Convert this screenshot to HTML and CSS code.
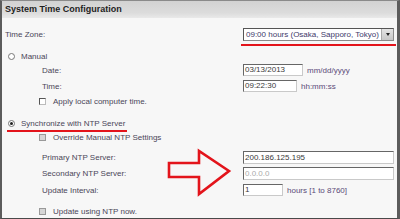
FILE: index.html
```html
<!DOCTYPE html>
<html>
<head>
<meta charset="utf-8">
<link rel="stylesheet" href="styles.css">
</head>
<body>
<div class="panel">
  <div class="header">System Time Configuration</div>
  <div class="body">
    <div class="row tz">
      <div class="label l0">Time Zone:</div>
      <div class="field">
        <div class="select mark-tz">
          <span class="select-text">09:00 hours (Osaka, Sapporo, Tokyo)</span>
          <span class="select-btn"><span class="tri"></span></span>
        </div>
      </div>
    </div>
    <div class="row manual">
      <div class="label l1"><span class="radio"></span>Manual</div>
    </div>
    <div class="row date">
      <div class="label l2">Date:</div>
      <div class="field"><span class="input w60">03/13/2013</span><span class="unit">mm/dd/yyyy</span></div>
    </div>
    <div class="row time">
      <div class="label l2">Time:</div>
      <div class="field"><span class="input w54">09:22:30</span><span class="unit">hh:mm:ss</span></div>
    </div>
    <div class="row apply">
      <div class="label l3"><span class="check"></span>Apply local computer time.</div>
    </div>
    <div class="row sync">
      <div class="label l1"><span class="mark-sync"><span class="radio on"></span>Synchronize with NTP Server</span></div>
    </div>
    <div class="row override">
      <div class="label l3"><span class="check dis"></span>Override Manual NTP Settings</div>
    </div>
    <div class="row primary">
      <div class="label l2">Primary NTP Server:</div>
      <div class="field"><span class="input wide">200.186.125.195</span></div>
    </div>
    <div class="row secondary">
      <div class="label l2">Secondary NTP Server:</div>
      <div class="field"><span class="input wide ph">0.0.0.0</span></div>
    </div>
    <div class="row interval">
      <div class="label l2">Update Interval:</div>
      <div class="field"><span class="input w40">1</span><span class="unit">hours [1 to 8760]</span></div>
    </div>
    <div class="row now">
      <div class="label l3"><span class="check dis"></span>Update using NTP now.</div>
    </div>
    <svg class="arrow" width="70" height="52" viewBox="0 0 70 52">
      <polygon points="4,15 34,15 34,3 64,23 34,46 34,29 4,29" fill="none" stroke="#e3141b" stroke-width="2.6" stroke-linejoin="miter"/>
    </svg>
  </div>
</div>
</body>
</html>
```
FILE: styles.css
```css
html, body { margin: 0; padding: 0; }
body {
  width: 400px;
  height: 219px;
  overflow: hidden;
  font-family: "Liberation Sans", Arial, sans-serif;
  font-size: 8px;
  color: #4a4658;
  background: #f7f7f7;
}
.panel {
  width: 400px;
  height: 219px;
  box-sizing: border-box;
  border-left: 2px solid #5c5c5c;
  border-right: 3px solid #5c5c5c;
  border-top: 1px solid #8a8a8a;
  border-bottom: 1px solid #4a4a4a;
  background: #f7f7f7;
  display: flex;
  flex-direction: column;
}
.header {
  height: 17px;
  flex: none;
  box-sizing: border-box;
  padding-left: 3px;
  line-height: 16px;
  font-family: "Liberation Sans", Arial, sans-serif;
  font-weight: bold;
  font-size: 9px;
  color: #1e1e1e;
  background: linear-gradient(#d2d2d2, #dcdcdc 70%, #e9e9e9);
}
.body {
  position: relative;
  flex: 1;
  display: flex;
  flex-direction: column;
}
.row {
  height: 14px;
  flex: none;
  display: grid;
  grid-template-columns: 241px 1fr;
  align-items: center;
}
.label {
  display: flex;
  align-items: center;
  white-space: nowrap;
}
.l0 { padding-left: 3px; }
.l1 { padding-left: 6px; }
.l2 { padding-left: 40px; }
.l3 { padding-left: 37px; }
.field {
  display: flex;
  align-items: center;
}
.tz { margin-top: 9px; }
.manual { margin-top: 8px; }
.date { margin-top: 0; }
.time { margin-top: 2px; }
.apply { margin-top: 1px; }
.sync { margin-top: 8px; }
.override { margin-top: 0; }
.primary { margin-top: 6px; }
.secondary { margin-top: 2px; }
.interval { margin-top: 3px; }
.now { margin-top: 7px; }

.select {
  position: relative;
  width: 151px;
  height: 13px;
  box-sizing: border-box;
  border: 1px solid #8a8a8a;
  border-top-color: #555;
  border-left-color: #555;
  background: #fff;
  display: flex;
  align-items: center;
}
.select-text {
  flex: 1;
  padding-left: 2px;
  font-size: 8px;
  color: #3e3a6a;
  white-space: nowrap;
}
.select-btn {
  width: 11px;
  height: 11px;
  background: linear-gradient(#e4e4e4, #c8c8c8);
  border-left: 1px solid #aaa;
  display: flex;
  align-items: center;
  justify-content: center;
}
.tri {
  width: 0; height: 0;
  border-left: 2.5px solid transparent;
  border-right: 2.5px solid transparent;
  border-top: 3px solid #222;
}
.mark-tz::after {
  content: "";
  position: absolute;
  left: -3px;
  right: -3px;
  top: 15px;
  height: 2px;
  background: #e3141b;
}
.input {
  height: 12px;
  box-sizing: border-box;
  border: 1px solid #c9c9c9;
  border-top-color: #666;
  border-left-color: #666;
  background: #fff;
  padding-left: 1px;
  line-height: 10px;
  font-size: 8px;
  color: #3a3a3a;
  white-space: nowrap;
}
.w60 { width: 60px; }
.w54 { width: 54px; }
.w40 { width: 40px; }
.wide { width: 151px; height: 13px; line-height: 11px; }
.ph { color: #aaa; }
.unit { margin-left: 4px; color: #5a4a78; }
.radio {
  width: 7px;
  height: 7px;
  box-sizing: border-box;
  border-radius: 50%;
  border: 1px solid #777;
  background: #fff;
  margin-right: 6px;
  position: relative;
  flex: none;
}
.radio.on::after {
  content: "";
  position: absolute;
  left: 1px; top: 1px;
  width: 3px; height: 3px;
  border-radius: 50%;
  background: #222;
}
.check {
  width: 7px;
  height: 7px;
  box-sizing: border-box;
  border: 1px solid #bbb;
  border-top-color: #555;
  border-left-color: #555;
  background: #fff;
  margin-right: 7px;
  flex: none;
}
.check.dis {
  background: #d6d6d6;
  border-color: #999;
}
.mark-sync {
  position: relative;
  display: flex;
  align-items: center;
}
.mark-sync::after {
  content: "";
  position: absolute;
  left: -1px;
  right: -2px;
  top: 11px;
  height: 2px;
  background: #e3141b;
}
.arrow {
  position: absolute;
  left: 163px;
  top: 130px;
}
```
